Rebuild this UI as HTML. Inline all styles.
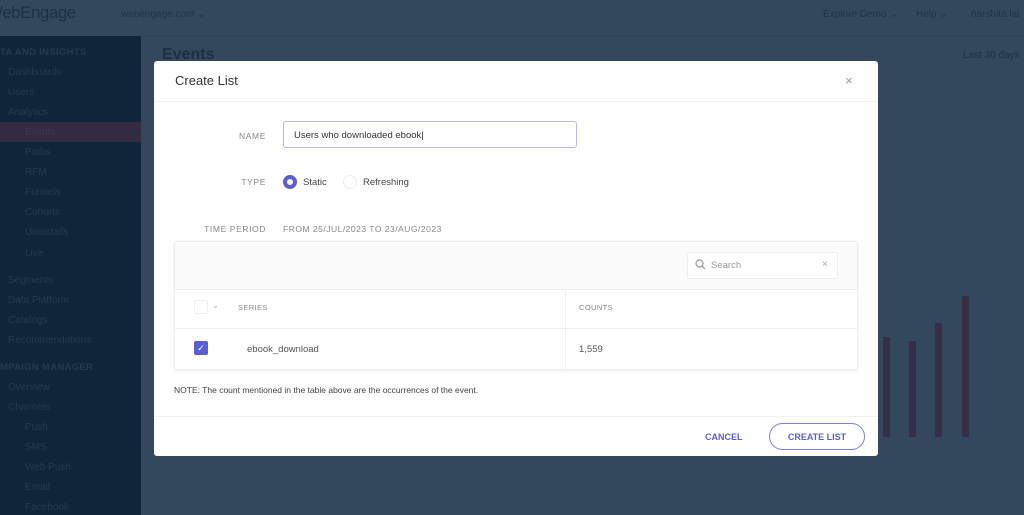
<!DOCTYPE html>
<html><head><meta charset="utf-8"><style>
*{margin:0;padding:0;box-sizing:border-box}
body{width:1024px;height:515px;overflow:hidden;background:#33485c;font-family:"Liberation Sans",sans-serif;position:relative}
.a{position:absolute;white-space:nowrap}
.sb{position:absolute;left:0;top:36px;width:141px;height:479px;background:#0f2639}
.si{position:absolute;font-size:10px;color:#233b50}
.h{font-weight:bold;color:#233b50;font-size:9.5px;letter-spacing:.3px}
.lbl{position:absolute;font-size:8.5px;color:#888;letter-spacing:.6px;text-align:right;width:120px}
.bar{position:absolute;width:7px;background:#372d45;bottom:78px}
</style></head><body>
<div class="a" style="left:-2px;top:3px;font-size:17px;color:#1c3043;letter-spacing:-.5px">/ebEngage</div>
<div class="a" style="left:121px;top:9px;font-size:10px;color:#1f3447">webengage.com ⌄</div>
<div class="a" style="left:823px;top:9px;font-size:10px;color:#1f3447">Explore Demo ⌄</div>
<div class="a" style="left:916px;top:9px;font-size:10px;color:#1f3447">Help ⌄</div>
<div class="a" style="left:971px;top:9px;font-size:10px;color:#1f3447">harshita lal ⌄</div>
<div class="a" style="left:141px;top:36px;width:883px;height:1px;background:#2e4256"></div>
<div class="sb"></div>
<div class="a" style="left:0;top:122px;width:141px;height:20px;background:#342a42"></div>
<div class="si h" style="left:0;top:47px">TA AND INSIGHTS</div>
<div class="si" style="left:8px;top:67px">Dashboards</div>
<div class="si" style="left:8px;top:87px">Users</div>
<div class="si" style="left:8px;top:107px">Analytics</div>
<div class="si" style="left:25px;top:127px;color:#44354f">Events</div>
<div class="si" style="left:25px;top:147px">Paths</div>
<div class="si" style="left:25px;top:167px">RFM</div>
<div class="si" style="left:25px;top:187px">Funnels</div>
<div class="si" style="left:25px;top:207px">Cohorts</div>
<div class="si" style="left:25px;top:227px">Uninstalls</div>
<div class="si" style="left:25px;top:248px">Live</div>
<div class="si" style="left:8px;top:275px">Segments</div>
<div class="si" style="left:8px;top:295px">Data Platform</div>
<div class="si" style="left:8px;top:315px">Catalogs</div>
<div class="si" style="left:8px;top:335px">Recommendations</div>
<div class="si h" style="left:0;top:362px">MPAIGN MANAGER</div>
<div class="si" style="left:8px;top:382px">Overview</div>
<div class="si" style="left:8px;top:402px">Channels</div>
<div class="si" style="left:25px;top:422px">Push</div>
<div class="si" style="left:25px;top:442px">SMS</div>
<div class="si" style="left:25px;top:462px">Web Push</div>
<div class="si" style="left:25px;top:482px">Email</div>
<div class="si" style="left:25px;top:502px">Facebook</div>
<div class="a" style="left:162px;top:46px;font-size:16px;font-weight:bold;color:#1c3043">Events</div>
<div class="a" style="left:963px;top:50px;font-size:10px;color:#1c3043">Last 30 days</div>
<div class="bar" style="left:883px;height:100px"></div>
<div class="bar" style="left:909px;height:96px"></div>
<div class="bar" style="left:935px;height:114px"></div>
<div class="bar" style="left:962px;height:141px"></div>

<div class="a" style="left:154px;top:61px;width:724px;height:395px;background:#fff;border-radius:3px"></div>
<div class="a" style="left:175px;top:73px;font-size:13px;color:#333">Create List</div>
<div class="a" style="left:845px;top:73px;font-size:13px;color:#999">×</div>
<div class="a" style="left:154px;top:101px;width:724px;height:1px;background:#f0f0f0"></div>
<div class="lbl" style="left:146px;top:131px">NAME</div>
<div class="a" style="left:283px;top:121px;width:294px;height:27px;border:1px solid #b8b8ea;border-radius:3px;font-size:9.5px;color:#333;padding:8px 10px">Users who downloaded ebook|</div>
<div class="lbl" style="left:146px;top:177px">TYPE</div>
<div class="a" style="left:283px;top:175px;width:14px;height:14px;border-radius:50%;border:4px solid #5b5fd6"></div>
<div class="a" style="left:303px;top:177px;font-size:9.5px;color:#444">Static</div>
<div class="a" style="left:343px;top:175px;width:14px;height:14px;border-radius:50%;border:1px solid #eee"></div>
<div class="a" style="left:363px;top:177px;font-size:9.5px;color:#444">Refreshing</div>
<div class="lbl" style="left:146px;top:224px">TIME PERIOD</div>
<div class="a" style="left:283px;top:224px;font-size:8.5px;color:#888;letter-spacing:.5px">FROM 25/JUL/2023 TO 23/AUG/2023</div>
<div class="a" style="left:174px;top:241px;width:684px;height:129px;border:1px solid #eee;border-radius:3px;box-shadow:0 1px 3px rgba(0,0,0,.08);overflow:hidden">
 <div class="a" style="left:0;top:0;width:684px;height:48px;background:#fbfbfb;border-bottom:1px solid #eee"></div>
 <div class="a" style="left:0;top:86px;width:684px;height:1px;background:#eee"></div>
 <div class="a" style="left:390px;top:48px;width:1px;height:81px;background:#eee"></div>
</div>
<div class="a" style="left:687px;top:252px;width:151px;height:27px;border:1px solid #eee;border-radius:3px;background:#fff"></div>
<svg class="a" style="left:695px;top:259px" width="11" height="11" viewBox="0 0 11 11"><circle cx="4.5" cy="4.5" r="3.5" fill="none" stroke="#999" stroke-width="1.2"/><path d="M7 7L10 10" stroke="#999" stroke-width="1.2"/></svg>
<div class="a" style="left:711px;top:260px;font-size:9.5px;color:#999">Search</div>
<div class="a" style="left:822px;top:259px;font-size:10px;color:#aaa">×</div>
<div class="a" style="left:194px;top:300px;width:14px;height:14px;border:1px solid #eee;border-radius:2px"></div>
<div class="a" style="left:212px;top:301px;font-size:8px;color:#aaa">⌄</div>
<div class="a" style="left:238px;top:303px;font-size:7.5px;color:#888;letter-spacing:.4px">SERIES</div>
<div class="a" style="left:579px;top:303px;font-size:7.5px;color:#888;letter-spacing:.4px">COUNTS</div>
<div class="a" style="left:194px;top:341px;width:14px;height:14px;background:#5b5fd6;border-radius:2px;color:#fff;font-size:9px;text-align:center;line-height:14px">✓</div>
<div class="a" style="left:247px;top:344px;font-size:9.5px;color:#555">ebook_download</div>
<div class="a" style="left:579px;top:344px;font-size:9.5px;color:#555">1,559</div>
<div class="a" style="left:174px;top:385px;font-size:8.5px;color:#444">NOTE: The count mentioned in the table above are the occurrences of the event.</div>
<div class="a" style="left:154px;top:416px;width:724px;height:1px;background:#f0f0f0"></div>
<div class="a" style="left:705px;top:432px;font-size:9px;font-weight:bold;color:#5b5fd6">CANCEL</div>
<div class="a" style="left:769px;top:423px;width:96px;height:27px;border:1.5px solid #7b7fe0;border-radius:14px;font-size:9px;font-weight:bold;color:#5b5fd6;display:flex;align-items:center;justify-content:center">CREATE LIST</div>
</body></html>
